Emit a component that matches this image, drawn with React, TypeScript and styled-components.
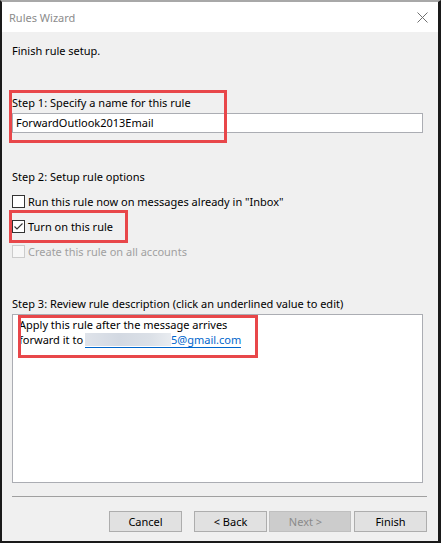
import React from 'react';
import styled, { createGlobalStyle } from 'styled-components';

const GlobalStyle = createGlobalStyle`
  html, body {
    margin: 0;
    padding: 0;
    background: #1a1a1a;
  }
  * {
    box-sizing: border-box;
  }
`;

const Window = styled.div`
  width: 441px;
  height: 543px;
  display: flex;
  flex-direction: column;
  background: #f0f0f0;
  border-top: 2px solid #a8a8a8;
  border-left: 2px solid #1a1a1a;
  border-right: 3px solid #1a1a1a;
  border-bottom: 2px solid #1a1a1a;
  font-family: 'Noto Sans', 'Liberation Sans', sans-serif;
  font-size: 11px;
  color: #000;
`;

const TitleBar = styled.div`
  height: 30px;
  flex: none;
  display: flex;
  align-items: center;
  padding: 0 10px 0 7px;
  background: #fff;
`;

const Title = styled.span`
  color: #8c8c8c;
`;

const CloseButton = styled.span`
  margin-left: auto;
  display: flex;
  width: 11px;
  height: 11px;
`;

const Body = styled.div`
  flex: 1;
  display: flex;
  flex-direction: column;
  padding: 11px 15px 0 10px;
`;

const Text = styled.div<{ $top?: number }>`
  line-height: 16px;
  height: 16px;
  white-space: nowrap;
  margin-top: ${(p) => p.$top ?? 0}px;
`;

const Section = styled.div<{ $top?: number }>`
  position: relative;
  display: flex;
  flex-direction: column;
  margin-top: ${(p) => p.$top ?? 0}px;
`;

// red annotation frame drawn over a group of controls
const Callout = styled.div<{ $l: number; $t: number; $w: number; $h: number }>`
  position: absolute;
  left: ${(p) => p.$l}px;
  top: ${(p) => p.$t}px;
  width: ${(p) => p.$w}px;
  height: ${(p) => p.$h}px;
  border: 3px solid #e8474a;
  pointer-events: none;
`;

const TextBox = styled.div`
  margin-top: 2px;
  height: 20px;
  border: 1px solid #abadb3;
  background: #fff;
  padding: 0 3px;
  line-height: 18px;
`;

const Options = styled.div`
  margin-top: 4px;
  display: flex;
  flex-direction: column;
`;

const OptionRow = styled.label<{ $disabled?: boolean }>`
  height: 25px;
  display: flex;
  align-items: center;
  gap: 3px;
  color: ${(p) => (p.$disabled ? '#a0a0a0' : '#000')};
  white-space: nowrap;
`;

const Box = styled.span<{ $disabled?: boolean }>`
  width: 13px;
  height: 13px;
  flex: none;
  display: flex;
  border: 1px solid ${(p) => (p.$disabled ? '#cccccc' : '#333')};
  background: ${(p) => (p.$disabled ? '#f7f7f7' : '#fff')};
`;

const Description = styled.div`
  position: relative;
  margin-top: 2px;
  height: 169px;
  border: 1px solid #abadb3;
  background: #fff;
  padding: 2px 6px;
  line-height: 15px;
`;

const Line = styled.div`
  height: 15px;
  white-space: nowrap;
`;

const Link = styled.span`
  margin-left: 2px;
  color: #0066cc;
  border-bottom: 1px solid #0066cc;
`;

const Redacted = styled.span`
  display: inline-block;
  vertical-align: -2px;
  width: 86px;
  height: 13px;
  background: linear-gradient(90deg, #dfe3ea 0%, #d3d9e2 40%, #dbe0e7 75%, #e9ecf0 100%);
`;

const Separator = styled.div`
  margin: 12px 11px 0 10px;
  border-top: 1px solid #a0a0a0;
`;

const Footer = styled.div`
  display: flex;
  justify-content: flex-end;
  padding: 14px 11px 9px 0;
`;

const Button = styled.button<{ $w?: number; $gap?: number }>`
  width: ${(p) => p.$w ?? 73}px;
  height: 21px;
  margin-left: ${(p) => p.$gap ?? 0}px;
  padding: 0;
  border: 1px solid #adadad;
  background: #e1e1e1;
  font-family: inherit;
  font-size: 11px;
  color: #000;

  &:disabled {
    background: #cccccc;
    border-color: #bfbfbf;
    color: #8a8a8a;
    padding-right: 9px;
  }
`;

function CheckOption({ checked, disabled, children }: { checked?: boolean; disabled?: boolean; children: React.ReactNode }) {
  return (
    <OptionRow $disabled={disabled}>
      <Box $disabled={disabled}>
        {checked && (
          <svg width="11" height="11" viewBox="0 0 11 11">
            <path d="M1.5 5.5 L4 8 L9.5 2.5" fill="none" stroke="#333" strokeWidth="1.1" />
          </svg>
        )}
      </Box>
      {children}
    </OptionRow>
  );
}

export default function App() {
  return (
    <>
      <GlobalStyle />
      <Window>
        <TitleBar>
          <Title>Rules Wizard</Title>
          <CloseButton>
            <svg width="11" height="11" viewBox="0 0 11 11">
              <path d="M0.5 0.5 L10.5 10.5 M10.5 0.5 L0.5 10.5" stroke="#707070" strokeWidth="1" />
            </svg>
          </CloseButton>
        </TitleBar>

        <Body>
          <Text>Finish rule setup.</Text>

          <Section $top={36}>
            <Text>Step 1: Specify a name for this rule</Text>
            <TextBox>ForwardOutlook2013Email</TextBox>
            <Callout $l={-3} $t={-5} $w={218} $h={53} />
          </Section>

          <Text $top={36}>Step 2: Setup rule options</Text>
          <Options>
            <CheckOption>Run this rule now on messages already in "Inbox"</CheckOption>
            <Section>
              <CheckOption checked>Turn on this rule</CheckOption>
              <Callout $l={-3} $t={-4} $w={119} $h={33} />
            </Section>
            <CheckOption disabled>Create this rule on all accounts</CheckOption>
          </Options>

          <Text $top={32}>Step 3: Review rule description (click an underlined value to edit)</Text>
          <Description>
            <Line>Apply this rule after the message arrives</Line>
            <Line>
              forward it to
              <Link>
                <Redacted />5@gmail.com
              </Link>
            </Line>
            <Callout $l={5} $t={0} $w={240} $h={43} />
          </Description>
        </Body>

        <Separator />
        <Footer>
          <Button>Cancel</Button>
          <Button $gap={12}>&lt; Back</Button>
          <Button $gap={2} $w={82} disabled>
            Next &gt;
          </Button>
          <Button $gap={3}>Finish</Button>
        </Footer>
      </Window>
    </>
  );
}
